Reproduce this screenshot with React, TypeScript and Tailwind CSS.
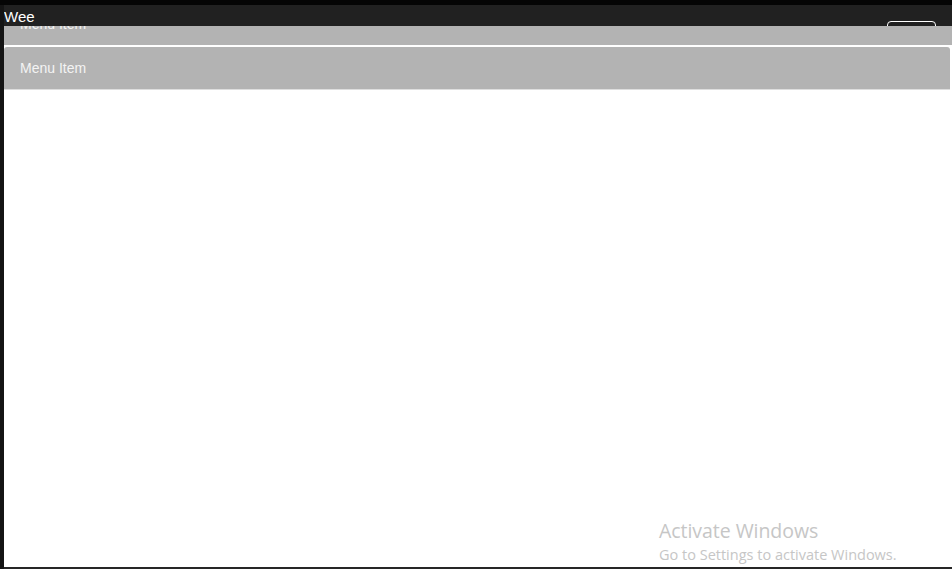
const MenuItem = ({ label }: { label: string }) => (
  <div className="h-[42px] shrink-0 flex items-center px-4 text-[14px] text-[#f4f4f4]">
    {label}
  </div>
);

export default function App() {
  return (
    <div
      className="relative w-[952px] h-[569px] flex flex-col bg-white overflow-hidden"
      style={{ fontFamily: '"Liberation Sans", Arial, sans-serif' }}
    >
      <div className="h-[5px] bg-[#050505] shrink-0" />
      <div className="flex flex-1 min-h-0">
        <div className="w-[4px] bg-[#141414] shrink-0" />
        <div className="flex-1 flex flex-col">
          {/* header */}
          <div className="h-[21px] shrink-0 bg-[#212121] flex justify-between overflow-hidden">
            <span className="text-white text-[15px] leading-[21px] pt-[1px]">Wee</span>
            <button className="mt-[16px] mr-[16px] w-[49px] h-[30px] shrink-0 rounded-[4px] border border-white" />
          </div>

          {/* menu */}
          <div className="h-[19px] shrink-0 overflow-hidden flex flex-col justify-end bg-[#b3b3b3]">
            <MenuItem label="Menu Item" />
          </div>
          <div className="h-[2px] shrink-0 bg-white" />
          <div className="pr-[2px] shrink-0">
            <div className="rounded-t-[3px] bg-[#b3b3b3] border-b border-[#dedede]">
              <MenuItem label="Menu Item" />
            </div>
          </div>
          <div className="flex-1" />
          <div className="h-[2px] bg-[#262626] shrink-0" />
        </div>
      </div>

      {/* windows watermark */}
      <div
        className="absolute left-[659px] top-[521px] text-[#c6c6c6] leading-none"
        style={{ fontFamily: '"Open Sans", "Noto Sans", sans-serif' }}
      >
        <div className="text-[19.5px] tracking-[-0.05px]">Activate Windows</div>
        <div className="text-[14.5px] mt-[7px] tracking-[0px]">Go to Settings to activate Windows.</div>
      </div>
    </div>
  );
}
